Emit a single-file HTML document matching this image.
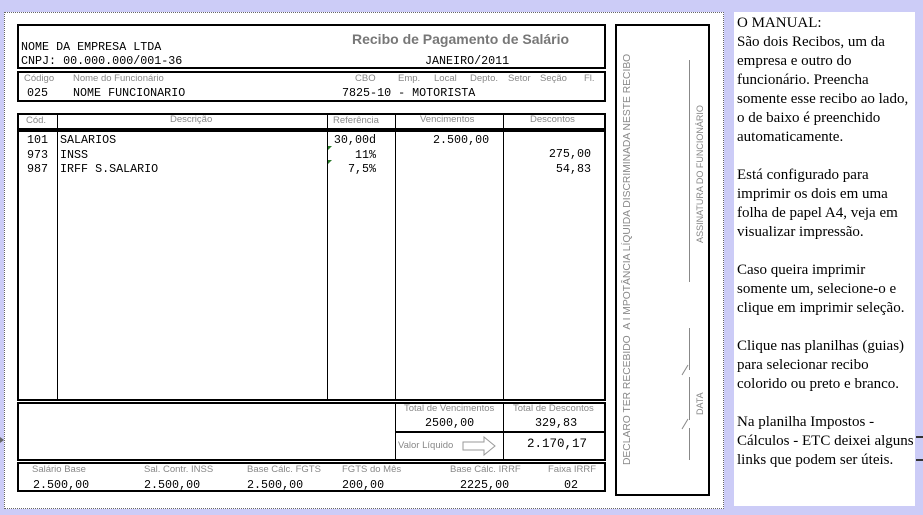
<!DOCTYPE html>
<html><head><meta charset="utf-8"><style>
*{margin:0;padding:0;box-sizing:border-box}
body{width:923px;height:515px;background:#ccccf7;position:relative;overflow:hidden;font-family:"Liberation Sans",sans-serif}
.a{position:absolute}
.b{position:absolute;border:2px solid #000;background:#fff}
.m{position:absolute;font-family:"Liberation Mono",monospace;font-size:11.7px;color:#000;white-space:nowrap}
.l{position:absolute;font-size:9.5px;color:#888;white-space:nowrap}
.vl{position:absolute;width:1px;background:#000}
.hl{position:absolute;height:1px;background:#000}
.t{position:absolute;left:737px;top:14px;width:185px;font-family:"Liberation Serif",serif;font-size:15px;line-height:19px;color:#000;white-space:nowrap}
</style></head><body>
<div class="a" style="left:4px;top:12px;width:720px;height:497px;background:#fff;border:1px dotted #666"></div>
<div class="a" style="left:734px;top:12px;width:181px;height:494px;background:#fff"></div>
<div class="t">O MANUAL:<br>São dois Recibos, um da<br>empresa e outro do<br>funcionário. Preencha<br>somente esse recibo ao lado,<br>o de baixo é preenchido<br>automaticamente.<br><br>Está configurado para<br>imprimir os dois em uma<br>folha de papel A4, veja em<br>visualizar impressão.<br><br>Caso queira imprimir<br>somente um, selecione-o e<br>clique em imprimir seleção.<br><br>Clique nas planilhas (guias)<br>para selecionar recibo<br>colorido ou preto e branco.<br><br>Na planilha Impostos -<br>Cálculos - ETC deixei alguns<br>links que podem ser úteis.</div>
<div class="a" style="left:916px;top:436px;width:7px;height:2px;background:#333"></div>
<div class="a" style="left:916px;top:459px;width:7px;height:2px;background:#333"></div>

<div class="b" style="left:17px;top:24px;width:589px;height:45px"></div>
<div class="m" style="left:21px;top:40px">NOME DA EMPRESA LTDA</div>
<div class="m" style="left:21px;top:54px">CNPJ: 00.000.000/001-36</div>
<div class="a" style="left:352px;top:31px;font-size:14px;font-weight:bold;color:#777">Recibo de Pagamento de Salário</div>
<div class="m" style="left:425px;top:54px">JANEIRO/2011</div>

<div class="b" style="left:17px;top:71px;width:589px;height:31px"></div>
<div class="l" style="left:24px;top:73px">Código</div>
<div class="l" style="left:73px;top:73px">Nome do Funcionário</div>
<div class="l" style="left:355px;top:73px">CBO</div>
<div class="l" style="left:398px;top:73px">Emp.</div>
<div class="l" style="left:434px;top:73px">Local</div>
<div class="l" style="left:470px;top:73px">Depto.</div>
<div class="l" style="left:508px;top:73px">Setor</div>
<div class="l" style="left:540px;top:73px">Seção</div>
<div class="l" style="left:584px;top:73px">Fl.</div>
<div class="m" style="left:27px;top:86px">025</div>
<div class="m" style="left:73px;top:86px">NOME FUNCIONARIO</div>
<div class="m" style="left:342px;top:86px">7825-10 - MOTORISTA</div>

<div class="b" style="left:17px;top:113px;width:589px;height:17px"></div>
<div class="vl" style="left:57px;top:113px;height:17px"></div>
<div class="vl" style="left:327px;top:113px;height:17px"></div>
<div class="vl" style="left:395px;top:113px;height:17px"></div>
<div class="vl" style="left:503px;top:113px;height:17px"></div>
<div class="l" style="left:26px;top:115px">Cód.</div>
<div class="l" style="left:170px;top:114px">Descrição</div>
<div class="l" style="left:333px;top:115px">Referência</div>
<div class="l" style="left:420px;top:114px">Vencimentos</div>
<div class="l" style="left:530px;top:114px">Descontos</div>

<div class="b" style="left:17px;top:130px;width:589px;height:271px"></div>
<div class="vl" style="left:57px;top:130px;height:271px"></div>
<div class="vl" style="left:327px;top:130px;height:271px"></div>
<div class="vl" style="left:395px;top:130px;height:271px"></div>
<div class="vl" style="left:503px;top:130px;height:271px"></div>
<div class="m" style="left:27px;top:133px;line-height:14.5px">101<br>973<br>987</div>
<div class="m" style="left:60px;top:133px;line-height:14.5px">SALARIOS<br>INSS<br>IRFF S.SALARIO</div>
<div class="m" style="left:330px;top:133px;line-height:14.5px;text-align:right;width:46px">30,00d<br>11%<br>7,5%</div>
<div class="m" style="left:433px;top:133px">2.500,00</div>
<div class="m" style="left:520px;top:147px;line-height:14.5px;text-align:right;width:71px">275,00<br>54,83</div>
<div class="a" style="left:328px;top:146px;border-top:4px solid #2a7a2a;border-right:4px solid transparent"></div>
<div class="a" style="left:328px;top:160px;border-top:4px solid #2a7a2a;border-right:4px solid transparent"></div>

<div class="b" style="left:17px;top:402px;width:589px;height:59px"></div>
<div class="vl" style="left:395px;top:402px;height:59px"></div>
<div class="vl" style="left:503px;top:402px;height:59px"></div>
<div class="hl" style="left:395px;top:431px;width:211px;height:2px"></div>
<div class="l" style="left:404px;top:403px">Total de Vencimentos</div>
<div class="l" style="left:513px;top:403px">Total de Descontos</div>
<div class="m" style="left:425px;top:416px">2500,00</div>
<div class="m" style="left:535px;top:416px">329,83</div>
<div class="l" style="left:398px;top:440px">Valor Líquido</div>
<svg class="a" style="left:462px;top:436px" width="36" height="20"><path d="M1 6H22V1L33 10L22 19V14H1Z" fill="#fff" stroke="#999"/></svg>
<div class="m" style="left:527px;top:437px;font-size:12.5px">2.170,17</div>

<div class="b" style="left:17px;top:462px;width:589px;height:30px"></div>
<div class="l" style="left:32px;top:464px">Salário Base</div>
<div class="l" style="left:144px;top:464px">Sal. Contr. INSS</div>
<div class="l" style="left:247px;top:464px">Base Cálc. FGTS</div>
<div class="l" style="left:342px;top:464px">FGTS do Mês</div>
<div class="l" style="left:450px;top:464px">Base Cálc. IRRF</div>
<div class="l" style="left:548px;top:464px">Faixa IRRF</div>
<div class="m" style="left:33px;top:478px">2.500,00</div>
<div class="m" style="left:144px;top:478px">2.500,00</div>
<div class="m" style="left:247px;top:478px">2.500,00</div>
<div class="m" style="left:342px;top:478px">200,00</div>
<div class="m" style="left:460px;top:478px">2225,00</div>
<div class="m" style="left:564px;top:478px">02</div>

<div class="b" style="left:615px;top:24px;width:95px;height:472px"></div>
<div class="a" style="left:622px;top:465px;transform:rotate(-90deg);transform-origin:0 0;font-size:10.3px;color:#888;white-space:nowrap;width:400px;text-align:center">DECLARO TER RECEBIDO &nbsp;A I MPOTÂNCIA LÍQUIDA DISCRIMINADA NESTE RECIBO</div>
<div class="a" style="left:689px;top:60px;width:1px;height:222px;background:#888"></div>
<div class="a" style="left:695px;top:244px;transform:rotate(-90deg);transform-origin:0 0;font-size:9px;color:#888;white-space:nowrap;width:140px;text-align:center">ASSINATURA DO FUNCIONÁRIO</div>
<svg class="a" style="left:670px;top:325px" width="30" height="150"><g stroke="#888" fill="none"><path d="M19.5 3V45M19.5 52V95M19.5 103V135M12 50L18 40M12 104L18 94"/></g></svg>
<div class="a" style="left:695px;top:415px;transform:rotate(-90deg);transform-origin:0 0;font-size:9px;color:#888">DATA</div>
<div class="a" style="left:0;top:437px;border-left:4px solid #666;border-top:3px solid transparent;border-bottom:3px solid transparent"></div>
</body></html>
